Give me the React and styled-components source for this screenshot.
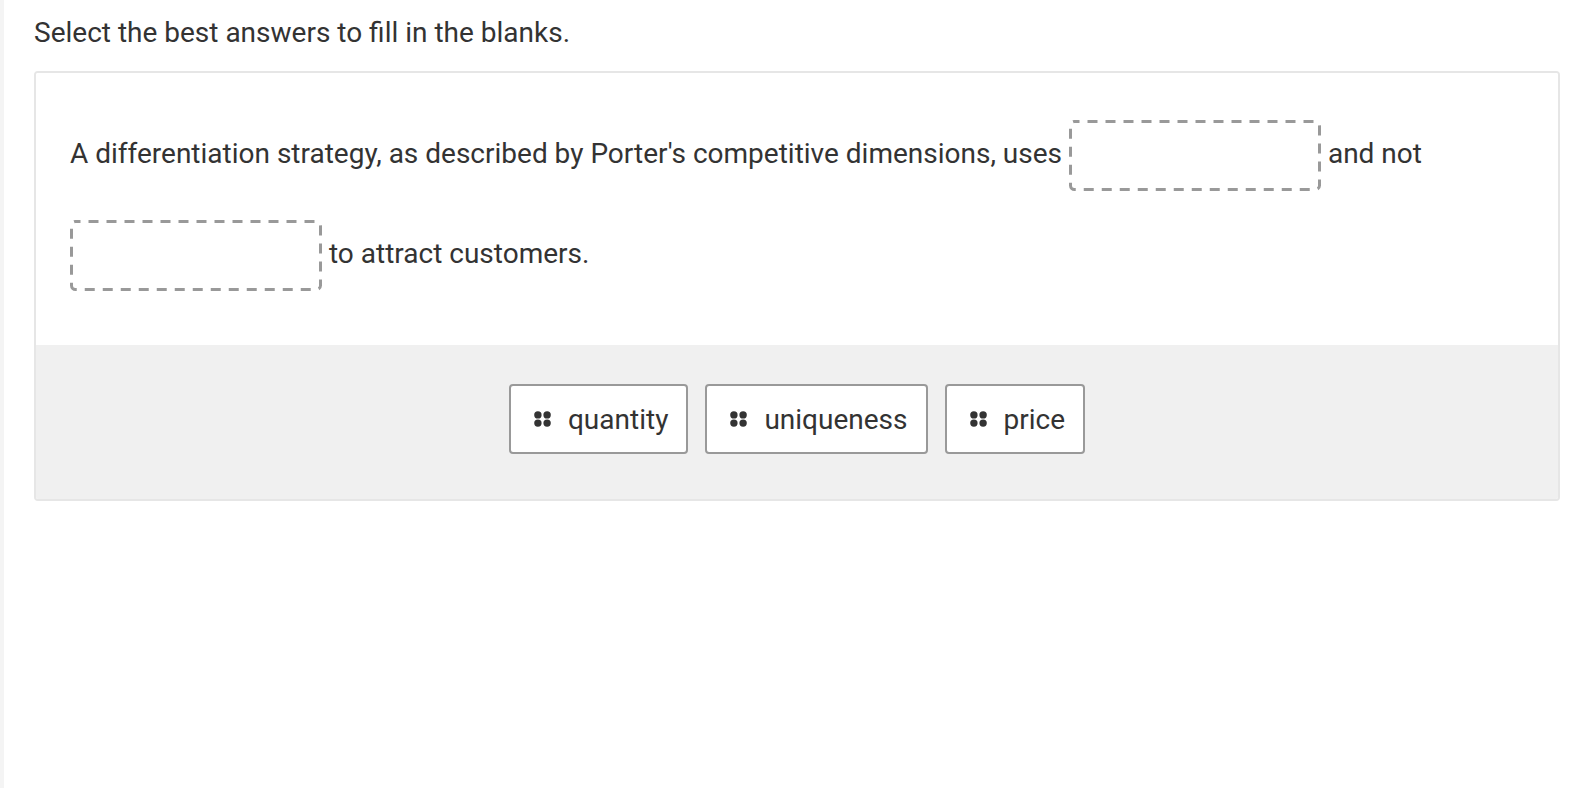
import styled, { createGlobalStyle } from 'styled-components';

const GlobalStyle = createGlobalStyle`
  html, body {
    margin: 0;
    padding: 0;
    background: #fff;
  }
  body {
    font-family: Roboto, "Liberation Sans", Arial, sans-serif;
    color: #333;
  }
`;

const Page = styled.div`
  display: flex;
  min-height: 788px;
`;

const Strip = styled.div`
  width: 4px;
  flex-shrink: 0;
  background: #f4f4f4;
`;

const Main = styled.main`
  flex: 1;
  padding: 16px 30px 0 30px;
`;

const Prompt = styled.h2`
  margin: 0 0 21px;
  font-size: 28px;
  font-weight: 400;
  line-height: 34px;
`;

const Card = styled.section`
  border: 2px solid #e6e6e6;
  border-radius: 4px;
  overflow: hidden;
`;

const Question = styled.p`
  margin: 0;
  padding: 31px 34px 41px;
  font-size: 28px;
  line-height: 100px;
  background: #fff;
`;

const Blank = styled.span`
  position: relative;
  display: inline-block;
  width: 252px;
  height: 71px;
  vertical-align: middle;
  line-height: normal;

  svg {
    position: absolute;
    inset: 0;
  }
`;

const Bank = styled.div`
  display: flex;
  justify-content: center;
  gap: 17px;
  padding: 39px 34px 45px;
  background: #f0f0f0;
`;

const Choice = styled.button`
  display: flex;
  align-items: center;
  gap: 17px;
  height: 70px;
  box-sizing: border-box;
  padding: 0 18px 0 23px;
  background: #fff;
  border: 2px solid #999;
  border-radius: 4px;
  font-family: inherit;
  font-size: 28px;
  color: #333;
  cursor: grab;
`;

const DropZone = () => (
  <Blank>
    <svg width="252" height="71" viewBox="0 0 252 71">
      <rect
        x="1.5"
        y="1.5"
        width="249"
        height="68"
        rx="4"
        fill="none"
        stroke="#999"
        strokeWidth="3"
        strokeDasharray="10 8"
        strokeDashoffset="5"
      />
    </svg>
  </Blank>
);

const Handle = () => (
  <svg width="17" height="16" viewBox="0 0 17 16" fill="#333">
    <circle cx="3.9" cy="3.9" r="3.7" />
    <circle cx="13.1" cy="3.9" r="3.7" />
    <circle cx="3.9" cy="12.1" r="3.7" />
    <circle cx="13.1" cy="12.1" r="3.7" />
  </svg>
);

const choices = ['quantity', 'uniqueness', 'price'];

const App = () => (
  <>
    <GlobalStyle />
    <Page>
      <Strip />
      <Main>
        <Prompt>Select the best answers to fill in the blanks.</Prompt>
        <Card>
          <Question>
            A differentiation strategy, as described by Porter's competitive dimensions, uses <DropZone /> and not <DropZone /> to attract customers.
          </Question>
          <Bank>
            {choices.map((c) => (
              <Choice key={c}>
                <Handle />
                {c}
              </Choice>
            ))}
          </Bank>
        </Card>
      </Main>
    </Page>
  </>
);

export default App;
